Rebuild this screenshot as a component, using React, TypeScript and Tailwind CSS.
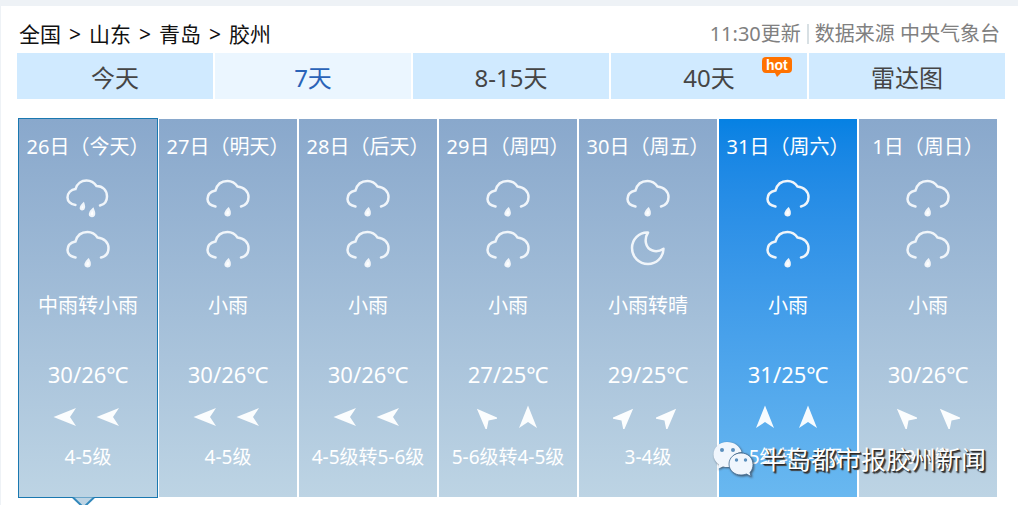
import clsx from 'clsx';

type Sky = 'moderateRain' | 'lightRain' | 'clear';

interface Forecast {
  date: string;
  day: Sky;
  night: Sky;
  weather: string;
  temperature: string;
  wind: [number, number];
  level: string;
}

const TABS = ['今天', '7天', '8-15天', '40天', '雷达图'];
const ACTIVE_TAB = '7天';
const HOT_TAB = '40天';

const CRUMBS = ['全国', '山东', '青岛', '胶州'];

// wind holds the arrow headings in degrees, 0 points up
const FORECAST: Forecast[] = [
  { date: '26日（今天）', day: 'moderateRain', night: 'lightRain', weather: '中雨转小雨', temperature: '30/26℃', wind: [-90, -90], level: '4-5级' },
  { date: '27日（明天）', day: 'lightRain', night: 'lightRain', weather: '小雨', temperature: '30/26℃', wind: [-90, -90], level: '4-5级' },
  { date: '28日（后天）', day: 'lightRain', night: 'lightRain', weather: '小雨', temperature: '30/26℃', wind: [-90, -90], level: '4-5级转5-6级' },
  { date: '29日（周四）', day: 'lightRain', night: 'lightRain', weather: '小雨', temperature: '27/25℃', wind: [-45, 0], level: '5-6级转4-5级' },
  { date: '30日（周五）', day: 'lightRain', night: 'clear', weather: '小雨转晴', temperature: '29/25℃', wind: [45, 45], level: '3-4级' },
  { date: '31日（周六）', day: 'lightRain', night: 'lightRain', weather: '小雨', temperature: '31/25℃', wind: [0, 0], level: '4-5级转3-4级' },
  { date: '1日（周日）', day: 'lightRain', night: 'lightRain', weather: '小雨', temperature: '30/26℃', wind: [-45, -45], level: '3-4级' },
];

const SELECTED = 0;
const HIGHLIGHTED = 5;

function SkyIcon({ sky }: { sky: Sky }) {
  return (
    <svg viewBox="0 0 44 40" className="w-11 h-10" fill="none" stroke="#f0f5fa" strokeWidth="2.5" strokeLinecap="round" aria-hidden="true">
      {sky === 'clear' ? (
        <path d="M22 3.5 C13 3 6 10.5 6 19 C6 28 13 35 22 35 C30 35 37 29 37.5 19.8 C34 22 30 22.8 26.5 21.5 C19 19 18 10 22 3.5 Z" strokeLinejoin="round" />
      ) : sky === 'moderateRain' ? (
        <>
          <path d="M9.5 27 C4.5 26.5 1.5 23 1.5 19.5 C1.5 15 5 11.5 9.5 11 C11 5.5 15.5 2.5 20.5 2.5 C25.5 2.5 28.5 5 30.5 8 C37 8 41 12.5 41 18.5 C41 23 38.5 26.5 34 27.5" />
          <path d="M17.5 25.5 C14.8 28 13.5 31.2 16 31.5 C18.6 31.7 18.5 28.5 17.5 25.5 Z" fill="#fff" strokeWidth="2" />
          <path d="M27 31 C23.5 34 22.5 38 25.8 38.2 C29.3 38.4 28.5 34.5 27 31 Z" fill="#fff" strokeWidth="2" />
        </>
      ) : (
        <>
          <path d="M9.5 28.5 C4.5 27.5 1.5 24.5 1.5 21 C1.5 16.5 5 13.5 9.5 12.5 C11 6.5 15.5 3 21.5 3 C26.5 3 29.5 5.5 31.5 8.5 C38 9 42.5 13.5 42.5 19 C42.5 24 39.5 27.5 35 28.5" />
          <path d="M22.5 30.5 C19 33.5 18.2 37.3 21.3 37.5 C24.8 37.7 24.3 33.5 22.5 30.5 Z" fill="#fff" strokeWidth="2" />
        </>
      )}
    </svg>
  );
}

function WindArrow({ heading }: { heading: number }) {
  return (
    <svg viewBox="0 0 24 24" className="w-6 h-6" aria-hidden="true">
      <path d="M12 0.5 L21 23 L12 17 L3 23 Z" fill="#fff" fillOpacity="0.95" transform={`rotate(${heading} 12 12)`} />
    </svg>
  );
}

function HotBadge() {
  return (
    <span className="absolute top-1 left-[151px] h-4 px-1 rounded-sm bg-[#ff7200] text-white text-sm leading-4 font-bold font-['Liberation_Sans',sans-serif]">
      hot
      <svg viewBox="0 0 6 4" className="absolute top-4 left-3 w-2 h-1" aria-hidden="true">
        <path d="M0 0 H6 L2 4 Z" fill="#ff7200" />
      </svg>
    </span>
  );
}

function DayColumn({ forecast, selected, highlighted }: { forecast: Forecast; selected: boolean; highlighted: boolean }) {
  return (
    <li
      className={clsx(
        'relative flex flex-col items-center pt-3 pb-6 text-white whitespace-nowrap bg-linear-to-b',
        highlighted ? 'from-[#0581e3] to-[#69b8f0]' : 'from-[#89a8cc] to-[#bdd4e4]',
        selected && 'outline outline-[#1a78b0]',
      )}
    >
      <h2 className="text-[20px] leading-8">{forecast.date}</h2>
      <div className="flex flex-col gap-[11px] mt-[15px]">
        <SkyIcon sky={forecast.day} />
        <SkyIcon sky={forecast.night} />
      </div>
      <p className="mt-[21px] text-[20px] leading-8">{forecast.weather}</p>
      <p className="mt-9 text-[22px] leading-8">{forecast.temperature}</p>
      <div className="flex gap-[19px] mt-[15px] pr-1">
        <WindArrow heading={forecast.wind[0]} />
        <WindArrow heading={forecast.wind[1]} />
      </div>
      <p className="mt-3 text-[19px] leading-8">{forecast.level}</p>
      {selected && (
        <svg viewBox="0 0 24 11" className="absolute top-full left-13 w-6 h-3" aria-hidden="true">
          <path d="M2 0 L12.5 10 L23 0" fill="#bdd4e4" stroke="#3288bb" strokeWidth="2" />
        </svg>
      )}
    </li>
  );
}

function Watermark() {
  return (
    <div className="absolute right-8 bottom-7 flex items-center gap-2 text-white whitespace-nowrap">
      <svg viewBox="0 0 40 36" className="w-10 h-9 drop-shadow-[1px_1px_1px_#445566]" aria-hidden="true">
        <path d="M14 1 C6.5 1 0.5 6.5 0.5 13.5 C0.5 17.5 2.5 21 6 23.5 L4.5 28 L10 25.5 C12 26 15 26.3 17 25.8 C15 18 21 11.5 28.5 11 C27 5 21 1 14 1 Z" fill="#f0f6fd" />
        <path d="M28 12 C21 12 16 17 16 23 C16 29 21 34 28 34 C30 34 32 33.7 33.5 33 L38 35.5 L37 31.5 C39 29.5 40 26.5 40 23.5 C40 17 35 12 28 12 Z" fill="#f0f6fd" stroke="#3f6b93" strokeWidth="0.8" />
        <g fill="#5b8fbd">
          <circle cx="9" cy="9" r="2" />
          <circle cx="20" cy="9" r="2" />
          <circle cx="23.5" cy="19" r="1.7" />
          <circle cx="32.5" cy="19" r="1.7" />
        </g>
      </svg>
      <span className="text-[25px] leading-9 [text-shadow:1px_1px_1px_#222,2px_2px_1px_#444]">半岛都市报胶州新闻</span>
    </div>
  );
}

export default function App() {
  return (
    <main
      lang="zh-CN"
      className="relative bg-white border-t-6 border-l border-[#eef2f6] font-normal font-['Noto_Sans','Noto_Sans_CJK_SC',sans-serif]"
    >
      <header className="flex items-center justify-between pt-2 pl-4 pr-[18px] h-[47px] whitespace-nowrap">
        <nav className="flex gap-2 pl-0.5 text-[21px] leading-8 text-[#111]">
          {CRUMBS.map((crumb, i) => (
            <span key={crumb} className="flex gap-2">
              {i > 0 && <span>&gt;</span>}
              <a href="#">{crumb}</a>
            </span>
          ))}
        </nav>
        <p className="flex items-center gap-1.5 text-[20px] leading-8 text-[#808080]">
          <span>11:30更新</span>
          <span className="w-0.5 h-5 bg-[#d8e0e4]" />
          <span>数据来源 中央气象台</span>
        </p>
      </header>

      <nav className="grid grid-cols-5 gap-0.5 ml-4 mr-[13px]">
        {TABS.map((tab) => (
          <button
            key={tab}
            type="button"
            className={clsx(
              'relative h-[46px] pt-1 text-2xl',
              tab === ACTIVE_TAB ? 'bg-[#ebf6ff] text-[#2a63b8]' : 'bg-[#d0eaff] text-[#454545]',
            )}
          >
            {tab}
            {tab === HOT_TAB && <HotBadge />}
          </button>
        ))}
      </nav>

      <div className="relative pb-2">
        <ul className="grid grid-cols-7 gap-0.5 mt-5 ml-[18px] mr-[21px]">
          {FORECAST.map((forecast, i) => (
            <DayColumn key={forecast.date} forecast={forecast} selected={i === SELECTED} highlighted={i === HIGHLIGHTED} />
          ))}
        </ul>
        <Watermark />
      </div>
    </main>
  );
}
